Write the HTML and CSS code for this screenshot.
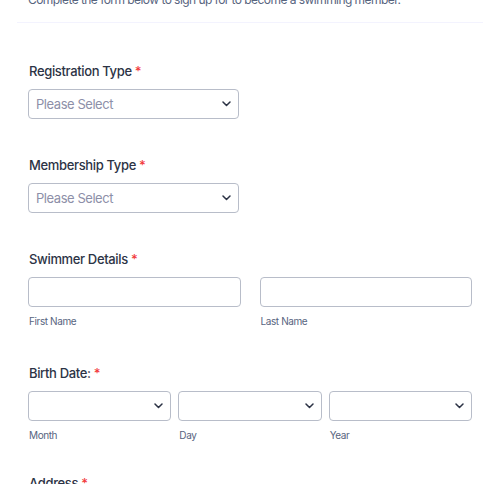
FILE: index.html
```html
<!DOCTYPE html>
<html lang="en">
<head>
    <meta charset="UTF-8">
    <title>Swimming Membership Form</title>
    <link rel="stylesheet" href="styles.css">
</head>
<body>
    <div class="form-wrap">
        <div class="form-header">
            <p class="subtitle">Complete the form below to sign up for to become a swimming member.</p>
        </div>
        <ul class="form-list">
            <li class="form-line">
                <label class="form-label">Registration Type <span class="req">*</span></label>
                <div class="select-box half">
                    <span class="placeholder">Please Select</span>
                    <svg class="chev" width="9" height="6" viewBox="0 0 9 6"><path d="M1 1l3.5 3.5L8 1" fill="none" stroke="#2c3345" stroke-width="1.5" stroke-linecap="round" stroke-linejoin="round"/></svg>
                </div>
            </li>
            <li class="form-line">
                <label class="form-label">Membership Type <span class="req">*</span></label>
                <div class="select-box half">
                    <span class="placeholder">Please Select</span>
                    <svg class="chev" width="9" height="6" viewBox="0 0 9 6"><path d="M1 1l3.5 3.5L8 1" fill="none" stroke="#2c3345" stroke-width="1.5" stroke-linecap="round" stroke-linejoin="round"/></svg>
                </div>
            </li>
            <li class="form-line">
                <label class="form-label">Swimmer Details <span class="req">*</span></label>
                <div class="row two">
                    <div class="sub">
                        <div class="input-box"></div>
                        <span class="sublabel">First Name</span>
                    </div>
                    <div class="sub">
                        <div class="input-box"></div>
                        <span class="sublabel">Last Name</span>
                    </div>
                </div>
            </li>
            <li class="form-line">
                <label class="form-label">Birth Date: <span class="req">*</span></label>
                <div class="row three">
                    <div class="sub">
                        <div class="select-box">
                            <svg class="chev" width="9" height="6" viewBox="0 0 9 6"><path d="M1 1l3.5 3.5L8 1" fill="none" stroke="#2c3345" stroke-width="1.5" stroke-linecap="round" stroke-linejoin="round"/></svg>
                        </div>
                        <span class="sublabel">Month</span>
                    </div>
                    <div class="sub">
                        <div class="select-box">
                            <svg class="chev" width="9" height="6" viewBox="0 0 9 6"><path d="M1 1l3.5 3.5L8 1" fill="none" stroke="#2c3345" stroke-width="1.5" stroke-linecap="round" stroke-linejoin="round"/></svg>
                        </div>
                        <span class="sublabel">Day</span>
                    </div>
                    <div class="sub">
                        <div class="select-box">
                            <svg class="chev" width="9" height="6" viewBox="0 0 9 6"><path d="M1 1l3.5 3.5L8 1" fill="none" stroke="#2c3345" stroke-width="1.5" stroke-linecap="round" stroke-linejoin="round"/></svg>
                        </div>
                        <span class="sublabel">Year</span>
                    </div>
                </div>
            </li>
            <li class="form-line">
                <label class="form-label">Address <span class="req">*</span></label>
            </li>
        </ul>
    </div>
</body>
</html>
```

FILE: styles.css
```css
* { margin: 0; padding: 0; box-sizing: border-box; }
body {
    background: #fff;
    font-family: Inter, "Noto Sans", sans-serif;
    color: #2c3345;
}
.form-wrap {
    padding: 0 17px;
}
.form-header {
    margin-top: -12px;
    padding: 0 11px 10px;
    border-bottom: 1px solid #f3f3fe;
}
.subtitle {
    font-size: 12px;
    letter-spacing: -0.55px;
    line-height: 24px;
    color: #57647e;
}
.form-list {
    list-style: none;
    padding: 2px 11px 0;
}
.form-line {
    padding-top: 37px;
}
.form-line:last-child {
    padding-top: 33px;
}
.form-label {
    display: block;
    font-size: 13px;
    font-weight: 500;
    letter-spacing: -0.35px;
    line-height: 18px;
    margin-bottom: 9px;
    padding-left: 1px;
}
.req { color: #f23a3c; }
.select-box, .input-box {
    position: relative;
    display: flex;
    align-items: center;
    height: 30px;
    border: 1px solid #b8bdc9;
    border-radius: 4px;
    background: #fff;
}
.half { width: 211px; }
.placeholder {
    padding-left: 7px;
    font-size: 13px;
    letter-spacing: -0.45px;
    color: #8d8fa8;
}
.chev {
    position: absolute;
    right: 7px;
    top: 11px;
}
.row { display: flex; }
.row.two { gap: 19px; }
.row.three { gap: 7px; }
.sub { flex: 1; }
.sublabel {
    display: block;
    margin-top: 8px;
    padding-left: 1px;
    font-size: 10px;
    letter-spacing: -0.4px;
    line-height: 12px;
    color: #57647e;
}
```
